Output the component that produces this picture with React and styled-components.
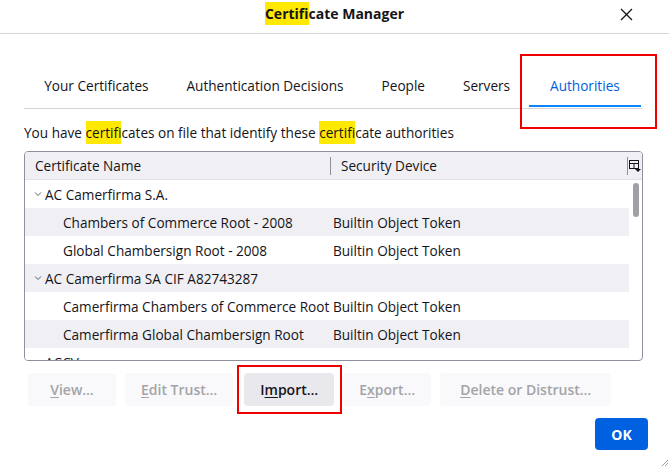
import React from "react";
import styled, { createGlobalStyle, css } from "styled-components";

const GlobalStyle = createGlobalStyle`
    html, body {
        margin: 0;
        padding: 0;
        background: #fff;
    }
    body {
        font-family: "Open Sans", "Noto Sans", sans-serif;
        font-size: 13.6px;
        color: #15141a;
    }
`;

const Dialog = styled.div`
    width: 669px;
    height: 467px;
    display: flex;
    flex-direction: column;
    position: relative;
    overflow: hidden;
`;

const TitleBar = styled.div`
    height: 34px;
    box-sizing: border-box;
    padding-top: 4px;
    border-bottom: 1px solid #d6d6d6;
    display: flex;
    justify-content: center;
    position: relative;
`;

const Title = styled.div`
    font-weight: bold;
    font-size: 14px;
    line-height: 20px;
`;

const Mark = styled.mark`
    background: #ffe900;
    color: inherit;
    padding: 2px 0;
`;

const CloseButton = styled.button`
    position: absolute;
    right: 34px;
    top: 5px;
    width: 18px;
    height: 18px;
    border: none;
    background: none;
    padding: 0;
    display: flex;
    align-items: center;
    justify-content: center;
`;

const Body = styled.div`
    padding: 21px 26px 0 24px;
    display: flex;
    flex-direction: column;
`;

const Tabs = styled.div`
    display: flex;
    justify-content: center;
    border-bottom: 1px solid #d6d6d6;
    height: 54px;
    box-sizing: border-box;
    margin-right: 1px;
`;

const Tab = styled.div`
    padding: 8px 19px 0;
    display: flex;
    align-items: center;
    white-space: nowrap;
    flex-shrink: 0;
    position: relative;
    color: #15141a;
    ${(p) =>
        p.$selected &&
        css`
            color: #0061e0;
            padding: 8px 21px 0;
            &::after {
                content: "";
                position: absolute;
                left: 0;
                right: 0;
                bottom: 1px;
                height: 2px;
                background: #0a84ff;
            }
        `}
`;

const Description = styled.div`
    margin-top: 14px;
    margin-bottom: 9px;
`;

const Tree = styled.div`
    border: 1px solid #8f8f9d;
    border-radius: 4px;
    height: 208px;
    width: 617px;
    overflow: hidden;
    display: flex;
    flex-direction: column;
`;

const TreeHeader = styled.div`
    height: 27px;
    background: #f0f0f4;
    border-bottom: 1px solid #e0e0e6;
    display: flex;
    align-items: center;
    flex-shrink: 0;
`;

const HeaderCell = styled.div`
    width: ${(p) => p.$width}px;
    padding-left: 10px;
    box-sizing: border-box;
    height: 18px;
    display: flex;
    align-items: center;
    border-right: ${(p) => (p.$divider ? "1px solid #8f8f9d" : "none")};
`;

const PickerCell = styled.div`
    margin-left: auto;
    width: 14px;
    height: 18px;
    border-left: 1px solid #8f8f9d;
    display: flex;
    align-items: center;
    justify-content: center;
`;

const TreeBody = styled.div`
    display: flex;
    flex: 1;
    min-height: 0;
`;

const Rows = styled.div`
    flex: 1;
    overflow: hidden;
`;

const Row = styled.div`
    height: 28px;
    display: flex;
    align-items: center;
    background: ${(p) => (p.$odd ? "#f0f0f4" : "#fff")};
    white-space: nowrap;
`;

const NameCell = styled.div`
    width: 308px;
    flex-shrink: 0;
    box-sizing: border-box;
    padding-left: ${(p) => (p.$child ? 38 : 8)}px;
    display: flex;
    align-items: center;
    gap: 2px;
`;

const DeviceCell = styled.div`
    padding-left: 0;
`;

const Scrollbar = styled.div`
    width: 13px;
    position: relative;
    flex-shrink: 0;
`;

const Thumb = styled.div`
    position: absolute;
    left: 4px;
    top: 3px;
    width: 6px;
    height: 34px;
    border-radius: 3px;
    background: #a0a0a5;
`;

const ButtonRow = styled.div`
    display: flex;
    gap: 9px;
    margin-top: 12px;
    padding-left: 4px;
`;

const Button = styled.button`
    font-family: inherit;
    font-size: 14px;
    height: 33px;
    min-width: 88px;
    padding: 0 ${(p) => p.$pad || 16}px;
    margin-right: ${(p) => p.$gap || 0}px;
    border: none;
    border-radius: 4px;
    background: ${(p) => (p.$disabled ? "#f9f9fb" : "#e9e9ed")};
    color: ${(p) => (p.$disabled ? "#a4a4a8" : "#15141a")};
    font-weight: 600;
    u {
        text-decoration-thickness: 1px;
        text-underline-offset: 2px;
    }
`;

const Highlight = styled.div`
    position: absolute;
    border: 2px solid #ee0000;
    box-sizing: border-box;
    pointer-events: none;
    left: ${(p) => p.$x}px;
    top: ${(p) => p.$y}px;
    width: ${(p) => p.$w}px;
    height: ${(p) => p.$h}px;
`;

const Footer = styled.div`
    display: flex;
    justify-content: flex-end;
    padding: 12px 21px 0 0;
`;

const OkButton = styled.button`
    font-family: inherit;
    font-size: 14px;
    font-weight: bold;
    width: 53px;
    height: 32px;
    border: none;
    border-radius: 4px;
    background: #0061e0;
    color: #fff;
`;

const Grip = styled.svg`
    position: absolute;
    right: 0;
    bottom: 0;
`;

const Chevron = () => (
    <svg width="10" height="10" viewBox="0 0 10 10">
        <path d="M2 3.5 L5 6.5 L8 3.5" fill="none" stroke="#5b5b66" strokeWidth="1" />
    </svg>
);

const ColumnPicker = () => (
    <svg width="12" height="12" viewBox="0 0 12 12">
        <rect x="0.5" y="0.5" width="9" height="8" fill="none" stroke="#15141a" />
        <path d="M0.5 3.5 H9.5 M5 3.5 V8.5" stroke="#15141a" fill="none" />
        <path d="M6 9 L12 9 L9 12 Z" fill="#15141a" />
    </svg>
);

const rows = [
    { name: "AC Camerfirma S.A.", group: true },
    { name: "Chambers of Commerce Root - 2008", device: "Builtin Object Token" },
    { name: "Global Chambersign Root - 2008", device: "Builtin Object Token" },
    { name: "AC Camerfirma SA CIF A82743287", group: true },
    { name: "Camerfirma Chambers of Commerce Root", device: "Builtin Object Token" },
    { name: "Camerfirma Global Chambersign Root", device: "Builtin Object Token" },
    { name: "ACCV", group: true },
];

export default function App() {
    return (
        <Dialog>
            <GlobalStyle />
            <TitleBar>
                <Title>
                    <Mark>Certifi</Mark>cate Manager
                </Title>
                <CloseButton aria-label="Close">
                    <svg width="13" height="13" viewBox="0 0 13 13">
                        <path d="M1 1 L12 12 M12 1 L1 12" stroke="#15141a" strokeWidth="1.3" />
                    </svg>
                </CloseButton>
            </TitleBar>
            <Body>
                <Tabs>
                    <Tab>Your Certificates</Tab>
                    <Tab>Authentication Decisions</Tab>
                    <Tab>People</Tab>
                    <Tab>Servers</Tab>
                    <Tab $selected>Authorities</Tab>
                </Tabs>
                <Description>
                    You have <Mark>certifi</Mark>cates on file that identify these{" "}
                    <Mark>certifi</Mark>cate authorities
                </Description>
                <Tree>
                    <TreeHeader>
                        <HeaderCell $width={306} $divider>
                            Certificate Name
                        </HeaderCell>
                        <HeaderCell $width={200}>Security Device</HeaderCell>
                        <PickerCell>
                            <ColumnPicker />
                        </PickerCell>
                    </TreeHeader>
                    <TreeBody>
                        <Rows>
                            {rows.map((row, i) => (
                                <Row key={row.name} $odd={i % 2 === 1}>
                                    <NameCell $child={!row.group}>
                                        {row.group && <Chevron />}
                                        {row.name}
                                    </NameCell>
                                    <DeviceCell>{row.device}</DeviceCell>
                                </Row>
                            ))}
                        </Rows>
                        <Scrollbar>
                            <Thumb />
                        </Scrollbar>
                    </TreeBody>
                </Tree>
                <ButtonRow>
                    <Button $disabled>
                        <u>V</u>iew…
                    </Button>
                    <Button $disabled $gap={2}>
                        <u>E</u>dit Trust…
                    </Button>
                    <Button>
                        I<u>m</u>port…
                    </Button>
                    <Button $disabled>
                        E<u>x</u>port…
                    </Button>
                    <Button $disabled $pad={20}>
                        <u>D</u>elete or Distrust…
                    </Button>
                </ButtonRow>
            </Body>
            <Footer>
                <OkButton>OK</OkButton>
            </Footer>
            <Highlight $x={520} $y={54} $w={137} $h={75} />
            <Highlight $x={237} $y={365} $w={105} $h={49} />
            <Grip width="8" height="8" viewBox="0 0 8 8">
                <path d="M7 1 L1 7 M7 4 L4 7" stroke="#9e9ea4" strokeWidth="1" />
            </Grip>
        </Dialog>
    );
}
